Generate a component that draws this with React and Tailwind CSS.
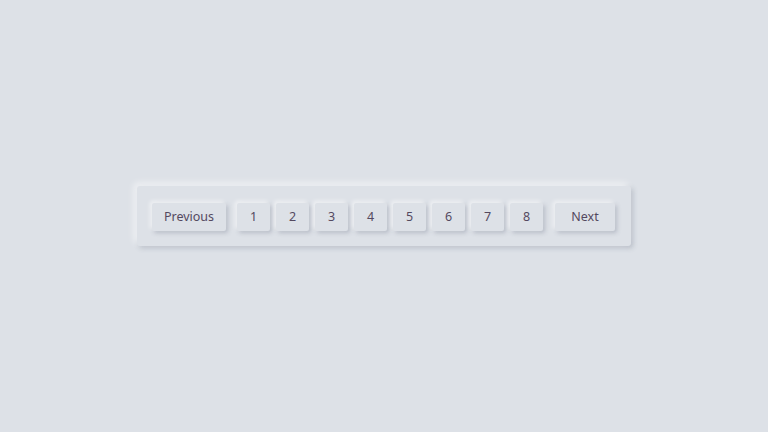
export default function App() {
  const pages = [1, 2, 3, 4, 5, 6, 7, 8];
  const btn =
    "h-[28px] flex items-center justify-center rounded-[2px] bg-[#dde1e7] text-[12.5px] text-[#54495f] shadow-[-2px_-2px_4px_rgba(255,255,255,0.6),2px_2px_4px_rgba(94,104,121,0.3)]";

  return (
    <div className="w-full h-screen bg-[#dde1e7] flex items-center justify-center font-['Noto_Sans',sans-serif]">
      <div className="w-[494px] h-[60px] rounded-[3px] bg-[#dde1e7] flex items-center pl-[15px] pr-[16px] pt-[2px] shadow-[-3px_-3px_7px_rgba(255,255,255,0.6),2px_2px_5px_rgba(94,104,121,0.3)]">
        <button className={`${btn} w-[74px]`}>Previous</button>
        <div className="flex gap-[6px] ml-[11px]">
          {pages.map((p) => (
            <button key={p} className={`${btn} w-[33px]`}>
              {p}
            </button>
          ))}
        </div>
        <button className={`${btn} w-[60px] ml-[12px]`}>Next</button>
      </div>
    </div>
  );
}
